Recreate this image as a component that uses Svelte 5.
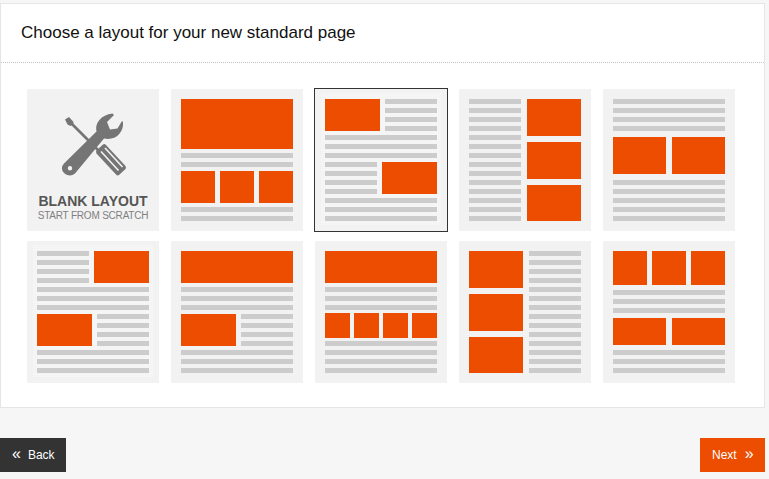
<script lang="ts">
  type Shape = { x: number; y: number; w: number; h: number; kind: 'line' | 'block' };

  const lines = (x: number, w: number, y: number, n: number): Shape[] =>
    Array.from({ length: n }, (_, i) => ({ x, y: y + i * 9, w, h: 5, kind: 'line' as const }));
  const block = (x: number, y: number, w: number, h: number): Shape[] => [
    { x, y, w, h, kind: 'block' }
  ];

  const layouts = [
    { id: 'hero-thirds', shapes: [...block(10, 10, 112, 50), ...lines(10, 112, 64, 2), ...block(10, 82, 34, 32), ...block(49, 82, 34, 32), ...block(88, 82, 34, 32), ...lines(10, 112, 118, 2)] },
    { id: 'zigzag-left', selected: true, inset: true, shapes: [...block(10, 10, 55, 32), ...lines(70, 52, 10, 4), ...lines(10, 112, 46, 3), ...lines(10, 52, 73, 4), ...block(67, 73, 55, 32), ...lines(10, 112, 109, 3)] },
    { id: 'column-right', shapes: [...lines(10, 52, 10, 14), ...block(68, 10, 54, 37), ...block(68, 53, 54, 37), ...block(68, 96, 54, 36)] },
    { id: 'text-halves', shapes: [...lines(10, 112, 10, 4), ...block(10, 48, 53, 37), ...block(69, 48, 53, 37), ...lines(10, 112, 91, 5)] },
    { id: 'zigzag-right', inset: true, shapes: [...lines(10, 52, 10, 4), ...block(67, 10, 55, 32), ...lines(10, 112, 46, 3), ...block(10, 73, 55, 32), ...lines(70, 52, 73, 4), ...lines(10, 112, 109, 3)] },
    { id: 'banner-left', shapes: [...block(10, 10, 112, 32), ...lines(10, 112, 46, 3), ...block(10, 73, 55, 32), ...lines(70, 52, 73, 4), ...lines(10, 112, 109, 3)] },
    { id: 'banner-quarters', shapes: [...block(10, 10, 112, 32), ...lines(10, 112, 46, 3), ...block(10, 72, 25, 25), ...block(39, 72, 25, 25), ...block(68, 72, 25, 25), ...block(97, 72, 25, 25), ...lines(10, 112, 100, 4)] },
    { id: 'column-left', shapes: [...block(10, 10, 54, 37), ...block(10, 53, 54, 37), ...block(10, 96, 54, 36), ...lines(70, 52, 10, 14)] },
    { id: 'thirds-halves', shapes: [...block(10, 10, 34, 34), ...block(49, 10, 34, 34), ...block(88, 10, 34, 34), ...lines(10, 112, 49, 3), ...block(10, 77, 53, 27), ...block(69, 77, 53, 27), ...lines(10, 112, 109, 3)] }
  ];
</script>

<div class="page">
  <section class="card">
    <header class="card__head">
      <h1>Choose a layout for your new standard page</h1>
    </header>

    <div class="grid">
      <button type="button" class="tile tile--blank">
        <svg class="tools" width="76" height="76" viewBox="0 0 76 76" aria-hidden="true">
          <path class="tools__shaft" d="M15 14 L43 42" />
          <path class="tools__fill" d="M10 11.500 L14 9 L18.500 14 L18 16.500 L15.500 18 L12.500 16.500 Z" />
          <path
            class="tools__fill"
            fill-rule="evenodd"
            d="M9 55.500 L41.500 23.500 C39.500 15 46 7 57.500 5.500 L59 7 L52 14 L55 21.500 L62.500 20.500 L67 13 L68 14 C69 25 60 33 49 30.500 L20 65.500 C15 70 6 66 7 59 Q7.500 57 9 55.500 Z M15 58 A2.200 2.200 0 1 0 15 62.400 A2.200 2.200 0 1 0 15 58 Z"
          />
          <path
            class="tools__fill"
            d="M41.500 42.500 L48 36.500 Q49.500 35.500 51 37 L70.500 58 Q71.500 60 70.500 61 L64 67 Q62.500 68 61 66.500 L41.500 45.500 Q40.500 43.500 41.500 42.500 Z"
          />
          <path class="tools__stripe" d="M46 43.500 L63.500 62.500 M50 40 L67.500 59" />
        </svg>
        <strong>BLANK LAYOUT</strong>
        <small>START FROM SCRATCH</small>
      </button>

      {#each layouts as layout (layout.id)}
        <button type="button" class="tile" class:tile--selected={layout.selected}>
          <svg width="132" height="142" viewBox="0 0 132 142" aria-hidden="true">
            {#if layout.inset}
              <rect class="inset" x="6" y="4" width="120" height="132" />
            {/if}
            {#each layout.shapes as s}
              <rect class={s.kind} x={s.x} y={s.y} width={s.w} height={s.h} />
            {/each}
          </svg>
        </button>
      {/each}
    </div>
  </section>

  <footer class="actions">
    <button type="button" class="btn btn--back"><span class="btn__arrow">«</span>Back</button>
    <button type="button" class="btn btn--next">Next<span class="btn__arrow">»</span></button>
  </footer>
</div>

<style>
  :global(body) {
    background: #f6f6f6;
  }

  .page {
    display: flex;
    flex-direction: column;
    height: 479px;
    box-sizing: border-box;
    padding: 3px 4px 0 0;
    font-family: "Liberation Sans", Arial, sans-serif;
    overflow: hidden;
  }

  .card {
    background: #fff;
    border: 1px solid #e5e5e5;
  }

  .card__head {
    height: 58px;
    display: flex;
    align-items: center;
    padding-left: 20px;
    border-bottom: 1px dotted #c4c4c4;
  }

  .card__head h1 {
    margin: 0;
    font-size: 17px;
    font-weight: 400;
    color: #111;
  }

  .grid {
    display: grid;
    grid-template-columns: repeat(5, 132px);
    grid-auto-rows: 142px;
    column-gap: 12px;
    row-gap: 10px;
    padding: 26px 0 24px 26px;
  }

  .tile {
    display: block;
    padding: 0;
    border: 0;
    background: #f2f2f2;
    cursor: pointer;
  }

  .tile svg {
    display: block;
  }

  .tile--selected {
    outline: 1px solid #333;
  }

  .tile--blank {
    display: flex;
    flex-direction: column;
    align-items: center;
    padding-top: 19px;
    font-family: inherit;
  }

  .tile--blank strong {
    margin-top: 9px;
    font-size: 14px;
    line-height: 16px;
    color: #555;
  }

  .tile--blank small {
    margin-top: 1px;
    font-size: 10px;
    letter-spacing: -0.2px;
    line-height: 11px;
    color: #808080;
  }

  .tools__fill {
    fill: #757575;
  }

  .tools__shaft {
    fill: none;
    stroke: #757575;
    stroke-width: 2.600;
  }

  .tools__stripe {
    fill: none;
    stroke: #f2f2f2;
    stroke-width: 1.600;
  }

  .inset {
    fill: #f5f5f5;
  }

  .line {
    fill: #ccc;
  }

  .block {
    fill: #ec4d00;
  }

  .actions {
    display: flex;
    justify-content: space-between;
    margin-top: 30px;
  }

  .btn {
    display: inline-flex;
    align-items: center;
    height: 34px;
    padding: 0;
    border: 0;
    color: #fff;
    font-family: inherit;
    font-size: 12px;
    cursor: pointer;
  }

  .btn__arrow {
    margin-bottom: 2px;
    font-size: 16px;
    line-height: 1;
  }

  .btn--back {
    width: 66px;
    padding-left: 12px;
    background: #333;
  }

  .btn--back .btn__arrow {
    margin-right: 7px;
  }

  .btn--next {
    width: 65px;
    padding-left: 12px;
    background: #ec4d00;
  }

  .btn--next .btn__arrow {
    margin-left: 8px;
  }
</style>
